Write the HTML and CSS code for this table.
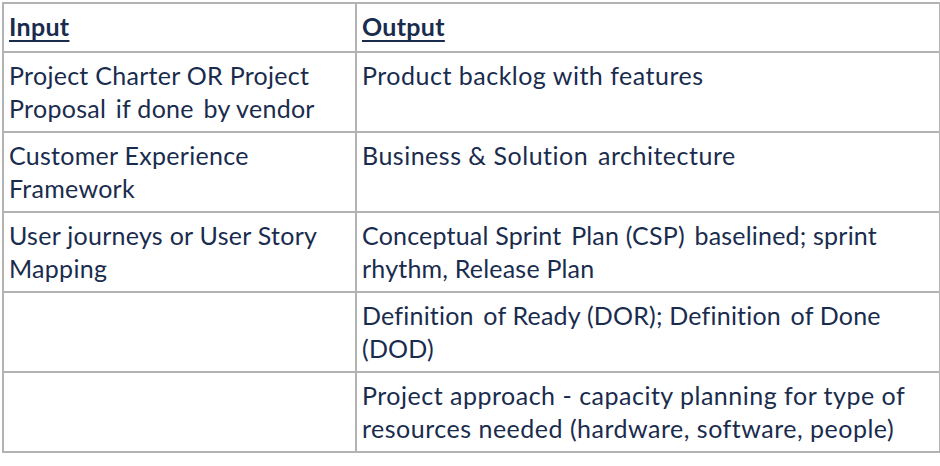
FILE: index.html
```html
<!DOCTYPE html>
<html>
<head>
<meta charset="utf-8">
<link rel="stylesheet" href="styles.css">
</head>
<body>
<table class="grid">
  <colgroup>
    <col class="col-in">
    <col class="col-out">
  </colgroup>
  <thead>
    <tr class="head-row">
      <th><span class="head">Input</span></th>
      <th><span class="head">Output</span></th>
    </tr>
  </thead>
  <tbody>
    <tr class="row">
      <td class="left">Project Charter OR Project<br>Proposal<span class="gap"> </span>if done<span class="gap"> </span>by vendor</td>
      <td>Product backlog with features</td>
    </tr>
    <tr class="row">
      <td class="left">Customer Experience<br>Framework</td>
      <td>Business &amp; Solution<span class="gap"> </span>architecture</td>
    </tr>
    <tr class="row">
      <td class="left">User journeys or User Story<br>Mapping</td>
      <td class="tight">Conceptual Sprint<span class="gap"> </span>Plan (CSP)<span class="gap"> </span>baselined; sprint<br>rhythm, Release Plan</td>
    </tr>
    <tr class="row">
      <td class="left"></td>
      <td class="tight">Definition<span class="gap"> </span>of Ready (DOR); Definition<span class="gap"> </span>of Done<br>(DOD)</td>
    </tr>
    <tr class="row">
      <td class="left"></td>
      <td>Project approach - capacity planning for type of<br>resources needed (hardware, software, people)</td>
    </tr>
  </tbody>
</table>
</body>
</html>
```

FILE: styles.css
```css
html, body {
  margin: 0;
  padding: 0;
  background: #ffffff;
}
body {
  padding: 2px 0 0 2px;
  font-family: Lato, "Open Sans", sans-serif;
  color: #1a2c4e;
}
.grid {
  border-collapse: collapse;
  table-layout: fixed;
  width: 937px;
}
.col-in { width: 353px; }
.col-out { width: 584px; }
.grid th, .grid td {
  border: 2px solid #b3b3b3;
  vertical-align: top;
  text-align: left;
  font-size: 25px;
  line-height: 33px;
  letter-spacing: 0.5px;
  white-space: nowrap;
  padding: 6px 4px 0 5px;
}
.grid td.left {
  letter-spacing: 0.28px;
}
.grid td.tight {
  letter-spacing: 0.2px;
}
.gap {
  word-spacing: 3px;
}
.head-row { height: 49px; }
.grid th {
  font-weight: 700;
  padding-top: 6px;
  letter-spacing: 0.3px;
}
.head {
  text-decoration: underline;
  text-decoration-thickness: 2px;
  text-underline-offset: 4px;
}
.row { height: 80px; }
```
